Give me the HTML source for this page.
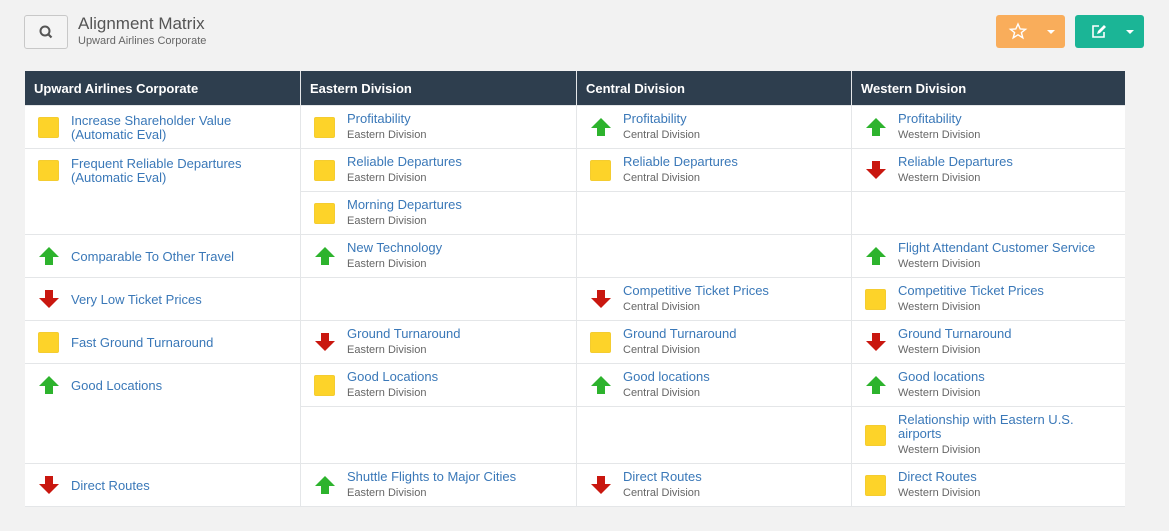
<!DOCTYPE html>
<html><head><meta charset="utf-8"><style>
body{margin:0;background:#f2f2f2;font-family:"Liberation Sans",sans-serif;width:1169px;height:531px;overflow:hidden;position:relative}
.sb{position:absolute;left:24px;top:15px;width:42px;height:32px;border:1px solid #c8c8c8;border-radius:3px;background:#f4f4f4}
.t1{position:absolute;left:78px;top:14px;font-size:17px;color:#555}
.t2{position:absolute;left:78px;top:35px;font-size:11px;color:#666}
.btn{position:absolute;top:15px;width:69px;height:33px;border-radius:3px}
.grid{position:absolute;left:25px;top:71px;display:grid;grid-template-columns:275px 275px 274px 273px;grid-template-rows:34px 42px 42px 42px 42px 42px 42px 42px 56px 42px;gap:1px;background:#e4e6e8;padding-bottom:1px}
.h{background:#2e3e4e;color:#fff;font-weight:bold;font-size:13px;padding-left:9px;line-height:35px}
.c{background:#fff;display:flex;align-items:center;padding-left:13px}
.k{background:#fff;padding-left:13px}
.k .in{height:42px;display:flex;align-items:center}
.ic{width:21px;height:21px;flex:none;margin-right:12px;display:flex;align-items:center;justify-content:center}
.sq{width:21px;height:21px;background:#fdd329;border-radius:2px;border:1px solid #f4cc30;box-sizing:border-box}
.tt{font-size:13px;color:#3a78b8;line-height:14px;margin-top:1px}
.ss{font-size:11px;color:#666;line-height:16px;margin-top:1px}
</style></head><body>
<div class="sb"><svg width="42" height="32"><circle cx="20" cy="15" r="4.5" fill="none" stroke="#555" stroke-width="2"/><line x1="23.5" y1="18.5" x2="26.5" y2="21.5" stroke="#555" stroke-width="2.2"/></svg></div>
<div class="t1">Alignment Matrix</div><div class="t2">Upward Airlines Corporate</div>
<div class="btn" style="left:996px;background:#f9ad5b"><svg width="69" height="33"><polygon points="22,9 24.2,14 29.5,14.3 25.4,17.6 26.8,22.8 22,19.8 17.2,22.8 18.6,17.6 14.5,14.3 19.8,14" fill="none" stroke="#fff" stroke-width="1.4"/><polygon points="51,15 59,15 55,19" fill="#fff"/></svg></div>
<div class="btn" style="left:1075px;background:#1bb596"><svg width="69" height="33"><path d="M24 11h-6v11h11v-5" fill="none" stroke="#fff" stroke-width="1.6"/><path d="M22 19l1-3 6-6 2 2-6 6z" fill="#fff"/><polygon points="51,15 59,15 55,19" fill="#fff"/></svg></div>
<svg width="0" height="0" style="position:absolute"><defs>
<symbol id="u" viewBox="0 0 20 18"><path d="M10 0L20 10H14V18H6V10H0Z" fill="#2db32d"/></symbol>
<symbol id="d" viewBox="0 0 20 18"><path d="M10 18L20 8H14V0H6V8H0Z" fill="#c9170f"/></symbol></defs></svg>
<div class="grid">
<div class="h">Upward Airlines Corporate</div><div class="h">Eastern Division</div><div class="h">Central Division</div><div class="h">Western Division</div>

<div class="k"><div class="in"><div class="ic"><div class="sq"></div></div><div class="tt">Increase Shareholder Value<br>(Automatic Eval)</div></div></div>
<div class="c"><div class="ic"><div class="sq"></div></div><div><div class="tt">Profitability</div><div class="ss">Eastern Division</div></div></div>
<div class="c"><div class="ic"><svg width="20" height="18"><use href="#u"/></svg></div><div><div class="tt">Profitability</div><div class="ss">Central Division</div></div></div>
<div class="c"><div class="ic"><svg width="20" height="18"><use href="#u"/></svg></div><div><div class="tt">Profitability</div><div class="ss">Western Division</div></div></div>

<div class="k" style="grid-row:span 2"><div class="in"><div class="ic"><div class="sq"></div></div><div class="tt">Frequent Reliable Departures<br>(Automatic Eval)</div></div></div>
<div class="c"><div class="ic"><div class="sq"></div></div><div><div class="tt">Reliable Departures</div><div class="ss">Eastern Division</div></div></div>
<div class="c"><div class="ic"><div class="sq"></div></div><div><div class="tt">Reliable Departures</div><div class="ss">Central Division</div></div></div>
<div class="c"><div class="ic"><svg width="20" height="18"><use href="#d"/></svg></div><div><div class="tt">Reliable Departures</div><div class="ss">Western Division</div></div></div>
<div class="c"><div class="ic"><div class="sq"></div></div><div><div class="tt">Morning Departures</div><div class="ss">Eastern Division</div></div></div>
<div class="c"></div><div class="c"></div>

<div class="k"><div class="in"><div class="ic"><svg width="20" height="18"><use href="#u"/></svg></div><div class="tt">Comparable To Other Travel</div></div></div>
<div class="c"><div class="ic"><svg width="20" height="18"><use href="#u"/></svg></div><div><div class="tt">New Technology</div><div class="ss">Eastern Division</div></div></div>
<div class="c"></div>
<div class="c"><div class="ic"><svg width="20" height="18"><use href="#u"/></svg></div><div><div class="tt">Flight Attendant Customer Service</div><div class="ss">Western Division</div></div></div>

<div class="k"><div class="in"><div class="ic"><svg width="20" height="18"><use href="#d"/></svg></div><div class="tt">Very Low Ticket Prices</div></div></div>
<div class="c"></div>
<div class="c"><div class="ic"><svg width="20" height="18"><use href="#d"/></svg></div><div><div class="tt">Competitive Ticket Prices</div><div class="ss">Central Division</div></div></div>
<div class="c"><div class="ic"><div class="sq"></div></div><div><div class="tt">Competitive Ticket Prices</div><div class="ss">Western Division</div></div></div>

<div class="k"><div class="in"><div class="ic"><div class="sq"></div></div><div class="tt">Fast Ground Turnaround</div></div></div>
<div class="c"><div class="ic"><svg width="20" height="18"><use href="#d"/></svg></div><div><div class="tt">Ground Turnaround</div><div class="ss">Eastern Division</div></div></div>
<div class="c"><div class="ic"><div class="sq"></div></div><div><div class="tt">Ground Turnaround</div><div class="ss">Central Division</div></div></div>
<div class="c"><div class="ic"><svg width="20" height="18"><use href="#d"/></svg></div><div><div class="tt">Ground Turnaround</div><div class="ss">Western Division</div></div></div>

<div class="k" style="grid-row:span 2"><div class="in"><div class="ic"><svg width="20" height="18"><use href="#u"/></svg></div><div class="tt">Good Locations</div></div></div>
<div class="c"><div class="ic"><div class="sq"></div></div><div><div class="tt">Good Locations</div><div class="ss">Eastern Division</div></div></div>
<div class="c"><div class="ic"><svg width="20" height="18"><use href="#u"/></svg></div><div><div class="tt">Good locations</div><div class="ss">Central Division</div></div></div>
<div class="c"><div class="ic"><svg width="20" height="18"><use href="#u"/></svg></div><div><div class="tt">Good locations</div><div class="ss">Western Division</div></div></div>
<div class="c"></div><div class="c"></div>
<div class="c"><div class="ic"><div class="sq"></div></div><div><div class="tt">Relationship with Eastern U.S.<br>airports</div><div class="ss">Western Division</div></div></div>

<div class="k"><div class="in"><div class="ic"><svg width="20" height="18"><use href="#d"/></svg></div><div class="tt">Direct Routes</div></div></div>
<div class="c"><div class="ic"><svg width="20" height="18"><use href="#u"/></svg></div><div><div class="tt">Shuttle Flights to Major Cities</div><div class="ss">Eastern Division</div></div></div>
<div class="c"><div class="ic"><svg width="20" height="18"><use href="#d"/></svg></div><div><div class="tt">Direct Routes</div><div class="ss">Central Division</div></div></div>
<div class="c"><div class="ic"><div class="sq"></div></div><div><div class="tt">Direct Routes</div><div class="ss">Western Division</div></div></div>
</div>
</body></html>
